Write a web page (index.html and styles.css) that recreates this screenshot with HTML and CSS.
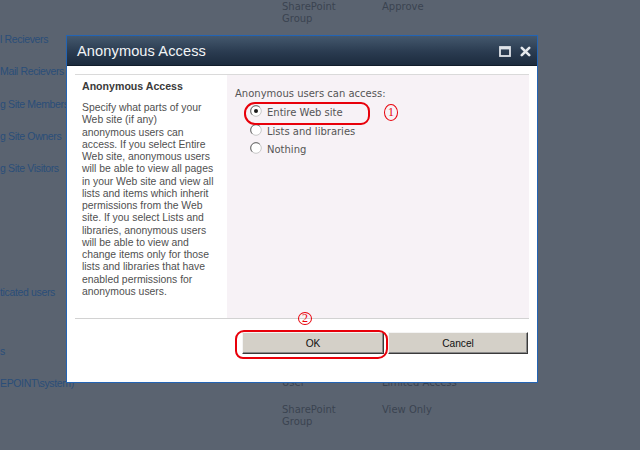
FILE: index.html
```html
<!DOCTYPE html>
<html>
<head>
<meta charset="utf-8">
<title>Anonymous Access</title>
<link rel="stylesheet" href="styles.css">
</head>
<body>
<div class="page">
  <div class="col col-links">
    <div class="link">l Recievers</div>
    <div class="link">Mail Recievers</div>
    <div class="link r3">g Site Members</div>
    <div class="link">g Site Owners</div>
    <div class="link">g Site Visitors</div>
    <div class="link r6">ticated users</div>
    <div class="link r7">s</div>
    <div class="link">EPOINT\system)</div>
  </div>
  <div class="col col-type">
    <div class="bg-txt">SharePoint<br>Group</div>
    <div class="bg-txt t-user">User</div>
    <div class="bg-txt t-grp">SharePoint<br>Group</div>
  </div>
  <div class="col col-perm">
    <div class="bg-txt">Approve</div>
    <div class="bg-txt p-lim">Limited Access</div>
    <div class="bg-txt p-view">View Only</div>
  </div>
</div>

<div class="dialog">
  <div class="titlebar">
    <span class="title">Anonymous Access</span>
    <span class="tb-icons">
      <svg class="tb-icon" width="12" height="11" viewBox="0 0 12 11"><rect x="1" y="1" width="10" height="9" fill="none" stroke="#dfe3e8" stroke-width="1.8"/><rect x="1" y="1" width="10" height="2.4" fill="#dfe3e8"/></svg>
      <svg class="tb-icon" width="11" height="11" viewBox="0 0 11 11"><path d="M1.8 1.8 L9.2 9.2 M9.2 1.8 L1.8 9.2" stroke="#e6e9ed" stroke-width="2.6" stroke-linecap="round"/></svg>
    </span>
  </div>
  <div class="body">
    <div class="section">
      <div class="desc">
        <div class="desc-head">Anonymous Access</div>
        <div class="desc-text">Specify what parts of your<br>Web site (if any)<br>anonymous users can<br>access. If you select Entire<br>Web site, anonymous users<br>will be able to view all pages<br>in your Web site and view all<br>lists and items which inherit<br>permissions from the Web<br>site. If you select Lists and<br>libraries, anonymous users<br>will be able to view and<br>change items only for those<br>lists and libraries that have<br>enabled permissions for<br>anonymous users.</div>
      </div>
      <div class="panel">
        <div class="prompt">Anonymous users can access:</div>
        <div class="opt">
          <svg class="radio" width="12" height="12" viewBox="0 0 12 12"><circle cx="6" cy="6" r="5.3" fill="#fff" stroke="#c8c8c8"/><path d="M2.2 9.8 A5.3 5.3 0 0 1 9.8 2.2" fill="none" stroke="#6a6a6a"/><circle cx="6" cy="6" r="2" fill="#1a1a1a"/></svg>
          <span>Entire Web site</span>
        </div>
        <div class="opt">
          <svg class="radio" width="12" height="12" viewBox="0 0 12 12"><circle cx="6" cy="6" r="5.3" fill="#fff" stroke="#c8c8c8"/><path d="M2.2 9.8 A5.3 5.3 0 0 1 9.8 2.2" fill="none" stroke="#6a6a6a"/></svg>
          <span>Lists and libraries</span>
        </div>
        <div class="opt">
          <svg class="radio" width="12" height="12" viewBox="0 0 12 12"><circle cx="6" cy="6" r="5.3" fill="#fff" stroke="#c8c8c8"/><path d="M2.2 9.8 A5.3 5.3 0 0 1 9.8 2.2" fill="none" stroke="#6a6a6a"/></svg>
          <span>Nothing</span>
        </div>
      </div>
    </div>
    <div class="buttons">
      <button class="btn btn-ok">OK</button>
      <button class="btn btn-cancel">Cancel</button>
    </div>
  </div>
  <div class="mark ring ring1"></div>
  <div class="mark ring ring2"></div>
  <div class="mark badge badge1">1</div>
  <div class="mark badge badge2">2</div>
</div>
</body>
</html>
```

FILE: styles.css
```css
html, body {
  margin: 0;
  padding: 0;
}
body {
  width: 640px;
  height: 450px;
  overflow: hidden;
  position: relative;
  background: #5a6370;
  font-family: "Liberation Sans", Arial, sans-serif;
}

/* dimmed page behind the dialog */
.page {
  display: grid;
  grid-template-columns: 282px 100px 1fr;
  height: 450px;
}
.col-links {
  padding-top: 33px;
}
.link {
  font-size: 10.5px;
  letter-spacing: -0.35px;
  line-height: 13px;
  color: #2a4e79;
  white-space: nowrap;
}
.link + .link { margin-top: 19px; }
.link.r3 { margin-top: 20px; }
.link.r6 { margin-top: 111px; }
.link.r7 { margin-top: 46px; }

.bg-txt {
  font-family: "DejaVu Sans", Verdana, sans-serif;
  font-size: 10px;
  line-height: 12px;
  color: #3a4350;
  white-space: nowrap;
}
.col-type, .col-perm { padding-top: 1px; }
.t-user { margin-top: 352px; }
.t-grp { margin-top: 15px; }
.p-lim { margin-top: 364px; }
.p-view { margin-top: 15px; }

/* dialog */
.dialog {
  position: absolute;
  left: 66px;
  top: 35px;
  width: 472px;
  height: 348px;
  box-sizing: border-box;
  border: 1px solid #2364b4;
  background: #fff;
  display: flex;
  flex-direction: column;
}
.titlebar {
  height: 30px;
  flex: none;
  box-sizing: border-box;
  display: flex;
  align-items: center;
  justify-content: space-between;
  padding: 0 6px 0 10px;
  background: linear-gradient(#44586d, #2a3b50 55%, #1c2b3e);
  border-bottom: 1px solid #111d2b;
}
.title {
  color: #f2f4f6;
  font-size: 14.6px;
  letter-spacing: 0.1px;
}
.tb-icons {
  display: flex;
  align-items: center;
  gap: 9px;
  padding-top: 1px;
}
.tb-icon { display: block; }

.body {
  flex: 1;
  padding: 8px 8px 0 8px;
}
.section {
  display: flex;
  height: 245px;
  box-sizing: border-box;
  border-top: 1px solid #dadada;
  border-bottom: 1px solid #d2d2d2;
}
.desc {
  width: 152px;
  flex: none;
  box-sizing: border-box;
  padding: 5px 0 0 7px;
}
.desc-head {
  font-weight: bold;
  font-size: 10.6px;
  line-height: 13px;
  color: #3a3a3a;
}
.desc-text {
  margin-top: 9px;
  font-size: 10.4px;
  line-height: 12.27px;
  color: #505050;
  white-space: nowrap;
}
.panel {
  flex: 1;
  background: #f7f2f6;
  padding: 12px 0 0 8px;
  font-family: "DejaVu Sans", Verdana, sans-serif;
  font-size: 10px;
  color: #555;
}
.prompt {
  line-height: 13px;
  margin-bottom: 3px;
}
.opt {
  display: flex;
  align-items: center;
  height: 18.7px;
  padding-left: 15px;
  gap: 5px;
}
.radio {
  display: block;
  margin-top: -3px;
}

.buttons {
  display: flex;
  justify-content: flex-end;
  gap: 4px;
  margin-top: 13px;
  padding-right: 1px;
}
.btn {
  height: 22px;
  padding: 0;
  margin: 0;
  font-family: "Liberation Sans", Arial, sans-serif;
  font-size: 10.2px;
  color: #111;
  background: #d4d0c8;
  border: 1px solid;
  border-color: #f4f4f4 #3a3a3a #3a3a3a #f4f4f4;
  box-shadow: inset -1px -1px 0 #8a8a8a;
}
.btn-ok { width: 142px; }
.btn-cancel { width: 140px; }

/* red annotations drawn over the screenshot */
.mark {
  position: absolute;
  box-sizing: border-box;
}
.ring {
  border: 2px solid #e8000a;
}
.ring1 {
  left: 177px;
  top: 66px;
  width: 126px;
  height: 23px;
  border-radius: 11px 9px 9px 11px;
}
.ring2 {
  left: 168px;
  top: 294px;
  width: 153px;
  height: 29px;
  border-radius: 9px 9px 10px 8px;
}
.badge {
  border: 1px solid #e8000a;
  border-radius: 50%;
  color: #e8000a;
  font-family: "Liberation Serif", serif;
  font-size: 12px;
  display: flex;
  align-items: center;
  justify-content: center;
}
.badge1 {
  left: 317px;
  top: 68px;
  width: 14px;
  height: 17px;
}
.badge2 {
  left: 231px;
  top: 276px;
  width: 14px;
  height: 13px;
}
```
